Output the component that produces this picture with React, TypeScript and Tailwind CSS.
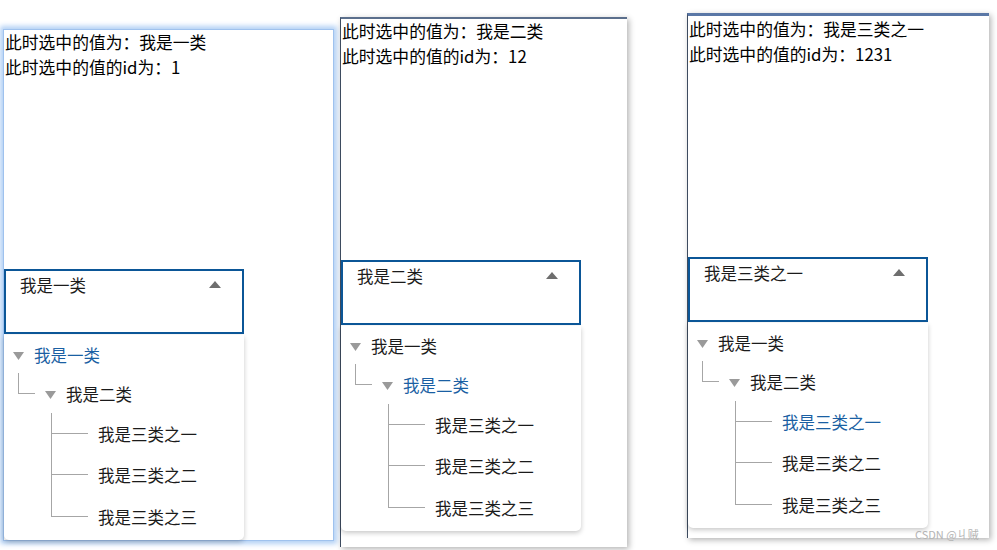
import React from "react";

const FONT = { fontFamily: '"Noto Sans CJK SC", "Microsoft YaHei", sans-serif' };

function Tri({ className = "" }: { className?: string }) {
  return (
    <svg width="11" height="8" viewBox="0 0 11 8" className={className}>
      <polygon points="0,0 11,0 5.5,8" fill="#9a9a9a" />
    </svg>
  );
}

function Tree({ selected }: { selected: number }) {
  const txt = (i: number) => (selected === i ? "text-[#1a5fa3]" : "text-[#1b1b1b]");
  const leaves = ["我是三类之一", "我是三类之二", "我是三类之三"];
  const leafH = ["h-[40px]", "h-[42px]", "h-[42px]"];
  return (
    <div className="mt-[1px] w-[240px] bg-white rounded-b-[5px] shadow-[0_2px_5px_rgba(0,0,0,0.22)] pt-[1px] pb-[2px]">
      <div className="relative h-[39px] flex items-center">
        <Tri className="ml-[9px]" />
        <span className="ml-[10px]"><span className={txt(0)}>我是一类</span></span>
      </div>
      <div className="relative h-[39px] flex items-center">
        <span className="absolute left-[14px] top-[-2px] h-[21px] w-[17px] border-l border-b border-[#a6a6a6]" />
        <Tri className="ml-[41px]" />
        <span className={`ml-[10px] ${txt(1)}`}>我是二类</span>
      </div>
      {leaves.map((l, i) => (
        <div key={l} className={`relative ${leafH[i]} flex items-center`}>
          <span className="absolute left-[47px] top-[-1px] h-[calc(50%+1px)] w-[37px] border-l border-b border-[#a6a6a6]" />
          {i < 2 && <span className="absolute left-[47px] top-1/2 bottom-0 border-l border-[#a6a6a6]" />}
          <span className={`ml-[94px] ${txt(i + 2)}`}>{l}</span>
        </div>
      ))}
    </div>
  );
}

function Panel({
  frame,
  value,
  id,
  selected,
  mt,
}: {
  frame: string;
  value: string;
  id: string;
  selected: number;
  mt: string;
}) {
  return (
    <div className={`bg-white flex flex-col shrink-0 ${frame}`}>
      <div className="leading-[25px] pl-[1px] text-[16.8px]">
        <div>此时选中的值为：{value}</div>
        <div>此时选中的值的id为：{id}</div>
      </div>
      <div className={mt}>
        <div className="relative w-[240px] h-[65px] border-2 border-[#0b5697] pl-[14px] pt-[4px] leading-[20px] text-[#1b1b1b]">
          {value}
          <svg width="12" height="7" viewBox="0 0 12 7" className="absolute right-[21px] top-[10px]">
            <polygon points="6,0 12,7 0,7" fill="#6e6e6e" />
          </svg>
        </div>
        <Tree selected={selected} />
      </div>
    </div>
  );
}

export default function App() {
  return (
    <div
      className="relative w-[997px] h-[550px] bg-white overflow-hidden text-[16.5px] text-black flex items-start"
      style={FONT}
    >
      <div className="ml-[3px] mt-[29px]">
        <Panel
          frame="w-[331px] h-[512px] border border-[#9fc2ee] shadow-[0_0_5px_3px_#b3d1f5]"
          value="我是一类"
          id="1"
          selected={0}
          mt="mt-[189px]"
        />
      </div>
      <div className="ml-[6px] mt-[17px]">
        <Panel
          frame="w-[287px] h-[530px] border-l border-l-[#3d4b5f] border-t-2 border-t-[#5b6f8c] shadow-[2px_2px_6px_rgba(0,0,0,0.3)]"
          value="我是二类"
          id="12"
          selected={1}
          mt="mt-[191px]"
        />
      </div>
      <div className="ml-[60px] mt-[13px]">
        <Panel
          frame="w-[302px] h-[525px] border-l border-l-[#3d4b5f] border-t-[3px] border-t-[#5a77a6] shadow-[2px_2px_6px_rgba(0,0,0,0.3)] pt-[1px]"
          value="我是三类之一"
          id="1231"
          selected={2}
          mt="mt-[190px]"
        />
      </div>
      <div className="absolute left-[915px] top-[527px] text-[11px] text-[#b4b4b4] leading-[14px]">
        CSDN @丩贼
      </div>
    </div>
  );
}
